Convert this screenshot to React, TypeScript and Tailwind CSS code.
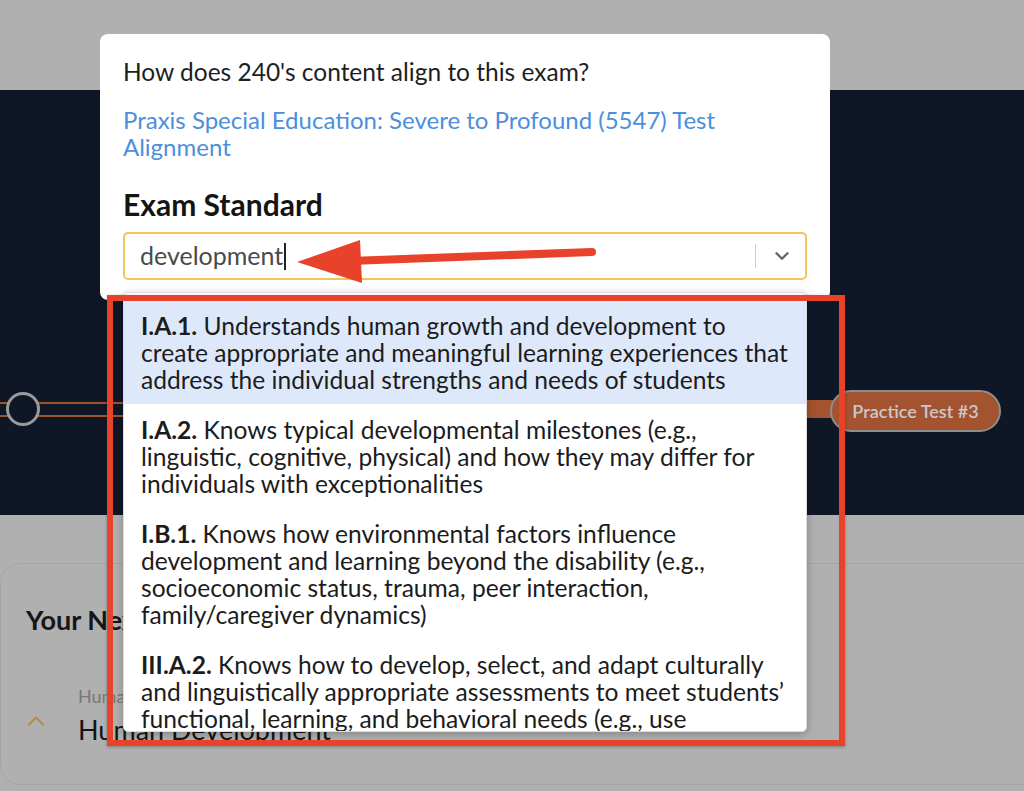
// App.tsx — exam standard picker (modal over a dimmed course page)
import { ChevronDown, ChevronUp } from "lucide-react";

const font = { fontFamily: "Lato, 'Liberation Sans', sans-serif" };

const standards = [
  {
    code: "I.A.1.",
    text: "Understands human growth and development to create appropriate and meaningful learning experiences that address the individual strengths and needs of students",
    active: true,
  },
  {
    code: "I.A.2.",
    text: "Knows typical developmental milestones (e.g., linguistic, cognitive, physical) and how they may differ for individuals with exceptionalities",
  },
  {
    code: "I.B.1.",
    text: "Knows how environmental factors influence development and learning beyond the disability (e.g., socioeconomic status, trauma, peer interaction, family/caregiver dynamics)",
  },
  {
    code: "III.A.2.",
    text: "Knows how to develop, select, and adapt culturally and linguistically appropriate assessments to meet students’ functional, learning, and behavioral needs (e.g., use standardized and informal tools)",
  },
];

export default function App() {
  return (
    <div className="relative w-[1024px] h-[791px] overflow-hidden bg-[#b0b0b0]" style={font}>
      {/* ── Page behind the overlay ─────────────────────────────────────── */}
      <div className="h-[90px] flex items-start pl-[137px] pt-[25px] text-[22px] text-[#555]">
        <span className="text-[#3f8a86]">Coursework</span>
        <span className="ml-[150px]">Tracking Hours</span>
        <span className="ml-[40px]">Advising</span>
      </div>

      <div className="h-[425px] bg-[#0f1726] relative">
        {/* timeline */}
        <div className="absolute left-0 w-[840px] top-[312px] h-[1.5px] bg-[#a0522d]" />
        <div className="absolute left-0 w-[840px] top-[325px] h-[1.5px] bg-[#a0522d]" />
        <div className="absolute left-[780px] w-[60px] top-[310px] h-[18px] bg-[#a3532f]" />
        <div className="absolute left-[6px] top-[302px] w-[34px] h-[34px] rounded-full border-[3px] border-[#9a9a9a] bg-[#0f1726]" />
        <div className="absolute left-[830px] top-[300px] w-[171px] h-[42px] rounded-full bg-[#a3532f] border-2 border-[#8d8d8d] flex items-center justify-center text-[18px] font-semibold text-[#c9c9c9]">
          Practice Test #3
        </div>
      </div>

      <div className="pt-[48px]">
        <div className="ml-0 w-[1100px] h-[222px] rounded-l-[20px] border border-[#a5a5a5] pl-[25px] pt-[36px]">
          <p className="text-[27px] font-bold text-[#161616]">Your Next Steps</p>
          <div className="flex items-start gap-[30px] mt-[44px]">
            <ChevronUp className="w-[28px] h-[28px] text-[#b58a3e] mt-[22px] -ml-[4px]" strokeWidth={1.6} />
            <div className="-ml-[2px]">
              <p className="text-[18px] text-[#777] leading-[22px]">Human Development</p>
              <p className="text-[27px] text-[#141414] leading-[34px] mt-[6px]">Human Development</p>
            </div>
          </div>
        </div>
      </div>

      {/* ── Modal ──────────────────────────────────────────────────────── */}
      <div className="absolute left-[100px] top-[34px] w-[730px] h-[266px] bg-white rounded-[8px] px-[23px] pt-[24px]">
        <p className="text-[24.5px] text-[#1e1e1e] leading-[28px]">How does 240's content align to this exam?</p>
        <p className="mt-[20px] text-[24px] text-[#4b8fdc] leading-[27px] pr-[60px]">
          Praxis Special Education: Severe to Profound (5547) Test Alignment
        </p>
        <p className="mt-[28px] text-[30px] font-bold text-[#141414] leading-[32px]">Exam Standard</p>
        <div className="mt-[12px] h-[48px] rounded-[5px] border-2 border-[#f4c35c] flex items-center pl-[15px] pr-[12px]">
          <span className="text-[25px] text-[#4a4a4a]">development</span>
          <span className="w-[1.5px] h-[27px] bg-[#222] ml-[1px]" />
          <div className="flex-1" />
          <span className="w-px h-[24px] bg-[#cfcfcf]" />
          <ChevronDown className="w-[22px] h-[22px] text-[#666] ml-[15px]" strokeWidth={2.6} />
        </div>
      </div>

      {/* ── Dropdown menu ──────────────────────────────────────────────── */}
      <div className="absolute left-[123px] top-[292px] w-[684px] h-[440px] bg-white rounded-[5px] border border-[#dcdcdc] shadow-[0_2px_8px_rgba(0,0,0,0.25)] overflow-hidden pt-[7px]">
        {standards.map((s) => (
          <div
            key={s.code}
            className={`pl-[17px] pr-[15px] py-[11.5px] text-[24.6px] leading-[27px] text-[#1c1c1c] ${s.active ? "bg-[#dde9fb]" : ""}`}
          >
            <span className="font-bold">{s.code}</span> {s.text}
          </div>
        ))}
      </div>

      {/* ── Red annotation ─────────────────────────────────────────────── */}
      <div className="absolute left-[107px] top-[295px] w-[738px] h-[451px] border-[6px] border-[#e8432a] shadow-[0_1px_3px_rgba(0,0,0,0.3)]" />
      <svg className="absolute left-[290px] top-[235px]" width="310" height="55" viewBox="0 0 310 55">
        <line x1="302" y1="17" x2="60" y2="26" stroke="#e8432a" strokeWidth="8" strokeLinecap="round" />
        <polygon points="7,27 70,5 72,48" fill="#e8432a" />
      </svg>
    </div>
  );
}
